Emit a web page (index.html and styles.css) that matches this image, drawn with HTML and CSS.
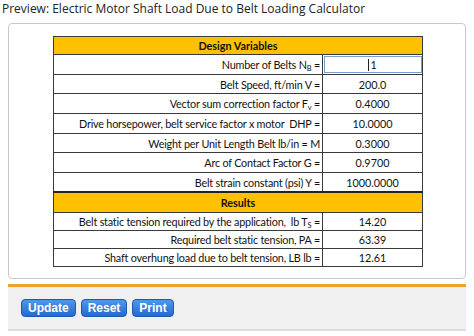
FILE: index.html
```html
<!DOCTYPE html>
<html lang="en">
<head>
  <meta charset="UTF-8">
  <title>Electric Motor Shaft Load Due to Belt Loading Calculator</title>
  <link rel="stylesheet" href="styles.css">
</head>
<body>
  <div class="titulo">Preview: Electric Motor Shaft Load Due to Belt Loading Calculator</div>

  <div class="panel">
    <table class="calc">
      <colgroup>
        <col class="col-etiqueta">
        <col class="col-valor">
      </colgroup>
      <tr class="encabezado"><td colspan="2">Design Variables</td></tr>
      <tr class="dato"><td class="etiqueta">Number of Belts N<sub>B</sub> =</td><td class="valor activo"><span class="cursor"></span>1</td></tr>
      <tr class="dato"><td class="etiqueta">Belt Speed, ft/min V =</td><td class="valor">200.0</td></tr>
      <tr class="dato"><td class="etiqueta">Vector sum correction factor F<sub>v</sub> =</td><td class="valor">0.4000</td></tr>
      <tr class="dato"><td class="etiqueta">Drive horsepower, belt service factor x motor&nbsp; DHP =</td><td class="valor">10.0000</td></tr>
      <tr class="dato"><td class="etiqueta">Weight per Unit Length Belt lb/in = M</td><td class="valor">0.3000</td></tr>
      <tr class="dato"><td class="etiqueta">Arc of Contact Factor G =</td><td class="valor">0.9700</td></tr>
      <tr class="dato"><td class="etiqueta">Belt strain constant (psi) Y =</td><td class="valor">1000.0000</td></tr>
      <tr class="encabezado resultados"><td colspan="2">Results</td></tr>
      <tr class="resultado"><td class="etiqueta">Belt static tension required by the application,&nbsp; lb T<sub>S</sub> =</td><td class="valor">14.20</td></tr>
      <tr class="resultado"><td class="etiqueta">Required belt static tension, PA =</td><td class="valor">63.39</td></tr>
      <tr class="resultado"><td class="etiqueta">Shaft overhung load due to belt tension, LB lb =</td><td class="valor">12.61</td></tr>
    </table>
  </div>

  <div class="barra">
    <button>Update</button>
    <button>Reset</button>
    <button>Print</button>
  </div>
</body>
</html>
```

FILE: styles.css
```css
body {
  margin: 0;
  background: #fff;
  color: #222;
  font-family: 'Open Sans', sans-serif;
}

.titulo {
  font-size: 12px;
  padding: 0 0 0 2px;
  height: 23px;
  line-height: 17px;
  color: #222;
}

.panel {
  margin: 0 8px;
  border: 1px solid #c8c8c8;
  border-radius: 4px;
  padding: 12px 0 11px;
}

.calc {
  border-collapse: collapse;
  margin-left: 44px;
  width: 369px;
  table-layout: fixed;
  font-family: 'Lato', sans-serif;
  font-size: 10.8px;
  letter-spacing: -0.2px;
  color: #111;
  border: 1px solid #333;
  white-space: nowrap;
}

.col-etiqueta {
  width: 269px;
}

.col-valor {
  width: 100px;
}

.calc td {
  border: 1px solid #3a3a3a;
  padding: 0 2px;
}

.calc sub {
  font-size: 7.5px;
  vertical-align: -2px;
  line-height: 0;
}

.encabezado {
  height: 18px;
}

.encabezado td {
  background: #ffc000;
  text-align: center;
  font-weight: bold;
  letter-spacing: 0;
}

.resultados {
  height: 20px;
}

.resultados td {
  border-top: 2px solid #222;
}

.dato {
  height: 19.7px;
}

.resultado {
  height: 18px;
}

.etiqueta {
  text-align: right;
}

.valor {
  text-align: center;
  background: #fff;
  letter-spacing: 0;
}

.activo {
  outline: 1px solid #7a9cd3;
  outline-offset: -2px;
}

.cursor {
  display: inline-block;
  width: 1px;
  height: 12px;
  background: #222;
  vertical-align: -2px;
  margin-right: 1px;
}

.barra {
  margin: 5px 8px 0;
  border-top: 3px solid #f0a22e;
  border-bottom: 2px solid #dcdcdc;
  background: #f0f0f0;
  height: 47px;
  padding: 12px 0 0 13px;
  box-sizing: border-box;
  display: flex;
  gap: 5px;
}

.barra button {
  height: 18px;
  padding: 0 6px;
  font-family: 'Liberation Sans', Arial, sans-serif;
  font-size: 12px;
  font-weight: bold;
  color: #fff;
  border: 1px solid #1d58b0;
  border-radius: 4px;
  background: linear-gradient(#4c98ea, #2769cf);
  cursor: pointer;
}
```
